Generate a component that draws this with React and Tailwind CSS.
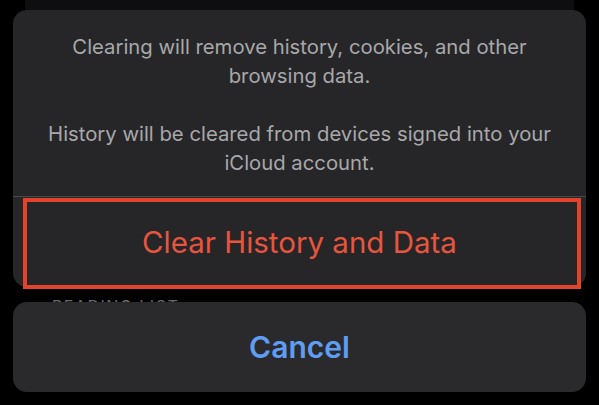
export default function App() {
  return (
    <div className="relative w-[599px] h-[405px] bg-black overflow-hidden" style={{ fontFamily: 'Inter, "Noto Sans", sans-serif' }}>
      {/* background page content */}
      <div className="mx-[25px] h-full flex flex-col">
        <div className="h-[10px] bg-[#0e0e11]" />
        <div className="pt-[284px] pl-[27px] text-[16px] tracking-[1.5px] text-[#6b6b6e]">READING LIST</div>
      </div>

      {/* action sheet */}
      <div className="absolute inset-0 px-[13px] pt-[10px] flex flex-col gap-[15px]">
        <div className="h-[277px] rounded-[14px] bg-[#262628] flex flex-col overflow-hidden">
          <div className="h-[186px] flex flex-col justify-center items-center text-center text-[20.3px] leading-[29px] text-[#a8a8aa] px-2 pt-[2px]">
            <p className="whitespace-nowrap">Clearing will remove history, cookies, and other<br />browsing data.</p>
            <p className="mt-[29px] whitespace-nowrap">History will be cleared from devices signed into your<br />iCloud account.</p>
          </div>
          <div className="h-px bg-[#48484a]" />
          <div className="flex-1 flex items-center justify-center text-[29.5px] text-[#e8553f]">
            Clear History and Data
          </div>
        </div>
        <div className="h-[90px] rounded-[14px] bg-[#2a2a2c] flex items-center justify-center text-[30px] font-semibold text-[#5f9df2]">
          Cancel
        </div>
      </div>

      {/* red annotation box */}
      <div className="absolute left-[23px] top-[198px] w-[558px] h-[91px] border-[4px] border-[#e2432b]" />
    </div>
  );
}
